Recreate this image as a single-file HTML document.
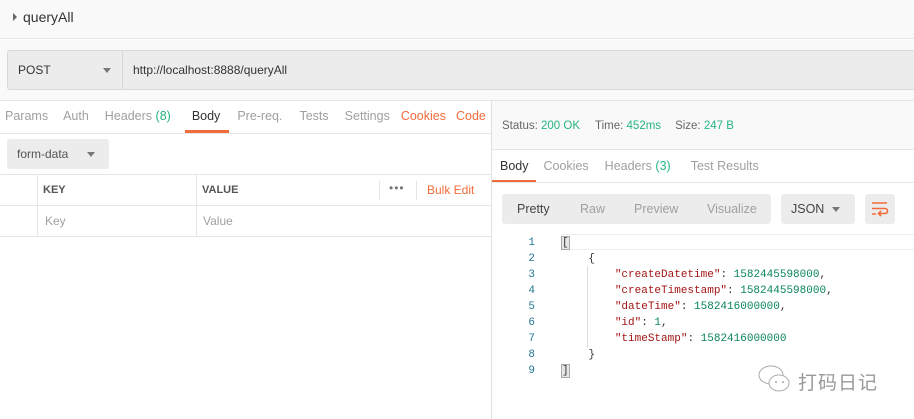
<!DOCTYPE html>
<html><head><meta charset="utf-8"><style>
*{box-sizing:border-box;margin:0;padding:0}
body{width:914px;height:419px;overflow:hidden;background:#fff;font-family:"Liberation Sans",sans-serif;font-size:12px;color:#505050;position:relative}
.a{position:absolute}
.g{color:#26b47f}
.o{color:#f26b3a}
.l{color:#a0a0a0}
.mono{font-family:"Liberation Mono",monospace;font-size:11px}
</style></head><body>
<div class="a" style="left:0;top:0;width:914px;height:39px;background:#f9f9f9;border-bottom:1px solid #e6e6e6"></div>
<div class="a" style="left:13px;top:13px;width:0;height:0;border-left:4px solid #666;border-top:4px solid transparent;border-bottom:4px solid transparent"></div>
<div class="a" style="left:23px;top:9px;font-size:14px;color:#333">queryAll</div>
<div class="a" style="left:0;top:40px;width:914px;height:60px;background:#f9f9f9"></div>
<div class="a" style="left:7px;top:50px;width:907px;height:40px;background:#ececec;border:1px solid #d8d8d8;border-right:none;border-radius:3px 0 0 3px"></div>
<div class="a" style="left:122px;top:51px;width:1px;height:38px;background:#d8d8d8"></div>
<div class="a" style="left:18px;top:63px;color:#333">POST</div>
<div class="a" style="left:103px;top:68px;border-top:5px solid #777;border-left:4px solid transparent;border-right:4px solid transparent"></div>
<div class="a" style="left:133px;top:63px;color:#333">http://localhost:8888/queryAll</div>
<div class="a" style="left:0;top:100px;width:914px;height:1px;background:#e6e6e6"></div>
<div class="a" style="left:0;top:133px;width:491px;height:1px;background:#e6e6e6"></div>
<div class="a" style="left:491px;top:100px;width:1px;height:319px;background:#e0e0e0"></div>
<div class="a l" style="left:5px;top:109px;font-size:12.5px;white-space:nowrap">Params<span style="margin-left:15px">Auth</span><span style="margin-left:16px">Headers <span class="g">(8)</span></span><span style="margin-left:21px;color:#333">Body</span><span style="margin-left:17px">Pre-req.</span><span style="margin-left:17px">Tests</span><span style="margin-left:16px">Settings</span><span class="o" style="margin-left:11px">Cookies</span><span class="o" style="margin-left:10px">Code</span></div>
<div class="a" style="left:185px;top:130px;width:44px;height:3px;background:#f26b3a"></div>
<div class="a" style="left:7px;top:139px;width:102px;height:30px;background:#ececec;border-radius:3px"></div>
<div class="a" style="left:17px;top:147px;color:#555">form-data</div>
<div class="a" style="left:87px;top:152px;border-top:5px solid #777;border-left:4px solid transparent;border-right:4px solid transparent"></div>
<div class="a" style="left:0;top:174px;width:491px;height:1px;background:#e6e6e6"></div>
<div class="a" style="left:0;top:205px;width:491px;height:1px;background:#e6e6e6"></div>
<div class="a" style="left:0;top:236px;width:491px;height:1px;background:#e6e6e6"></div>
<div class="a" style="left:37px;top:175px;width:1px;height:61px;background:#e6e6e6"></div>
<div class="a" style="left:196px;top:175px;width:1px;height:61px;background:#e6e6e6"></div>
<div class="a" style="left:379px;top:181px;width:1px;height:19px;background:#e6e6e6"></div>
<div class="a" style="left:416px;top:181px;width:1px;height:19px;background:#e6e6e6"></div>
<div class="a" style="left:43px;top:184px;font-size:11px;font-weight:bold;color:#555">KEY</div>
<div class="a" style="left:202px;top:184px;font-size:11px;font-weight:bold;color:#555">VALUE</div>
<div class="a" style="left:389px;top:181px;font-size:12px;color:#777;letter-spacing:1px">•••</div>
<div class="a o" style="left:427px;top:183px">Bulk Edit</div>
<div class="a l" style="left:45px;top:214px">Key</div>
<div class="a l" style="left:203px;top:214px">Value</div>
<div class="a" style="left:492px;top:101px;width:422px;height:49px;background:#f9f9f9;border-bottom:1px solid #e6e6e6"></div>
<div class="a" style="left:502px;top:120px;font-size:11.5px;color:#666;white-space:nowrap">Status:&nbsp;<span class="g">200 OK</span><span style="margin-left:15px">Time:&nbsp;</span><span class="g">452ms</span><span style="margin-left:14px">Size:&nbsp;</span><span class="g">247 B</span></div>
<div class="a l" style="left:500px;top:159px;font-size:12.5px;white-space:nowrap"><span style="color:#333">Body</span><span style="margin-left:15px">Cookies</span><span style="margin-left:16px">Headers <span class="g">(3)</span></span><span style="margin-left:20px">Test Results</span></div>
<div class="a" style="left:492px;top:180px;width:44px;height:3px;background:#f26b3a"></div>
<div class="a" style="left:492px;top:182px;width:422px;height:1px;background:#e6e6e6"></div>
<div class="a" style="left:502px;top:194px;width:269px;height:30px;background:#ececec;border-radius:3px"></div>
<div class="a" style="left:517px;top:202px;color:#444;font-size:12.5px">Pretty</div>
<div class="a l" style="left:580px;top:202px;font-size:12.5px">Raw</div>
<div class="a l" style="left:634px;top:202px;font-size:12.5px">Preview</div>
<div class="a l" style="left:707px;top:202px;font-size:12.5px">Visualize</div>
<div class="a" style="left:781px;top:194px;width:74px;height:30px;background:#ececec;border-radius:3px"></div>
<div class="a" style="left:791px;top:202px;color:#444;font-size:12.5px">JSON</div>
<div class="a" style="left:832px;top:207px;border-top:5px solid #777;border-left:4px solid transparent;border-right:4px solid transparent"></div>
<div class="a" style="left:865px;top:194px;width:30px;height:30px;background:#ececec;border-radius:3px"></div>
<svg class="a" style="left:870px;top:199px" width="20" height="20" viewBox="0 0 20 20"><path d="M2 4H17M2 9.5H15a2.5 2.5 0 0 1 0 5H9M11 12l-2.5 2.5L11 17M2 15H6" stroke="#f26b3a" stroke-width="1.6" fill="none"/></svg>
<div class="a" style="left:561px;top:234px;width:353px;height:16px;border-top:1px solid #eee;border-bottom:1px solid #eee"></div>
<div class="a" style="left:587px;top:266px;width:1px;height:82px;background:#ddd"></div>
<div class="a mono" style="left:521px;top:235px;line-height:16px;color:#237893;white-space:pre;text-align:right;width:14px">1
2
3
4
5
6
7
8
9</div>
<div class="a mono" style="left:562px;top:235px;line-height:16px;white-space:pre;color:#333"><span style="background:#e6e6e6;outline:1px solid #aaa">[</span>
    {
        <span style="color:#a31515">"createDatetime"</span>: <span style="color:#098658">1582445598000</span>,
        <span style="color:#a31515">"createTimestamp"</span>: <span style="color:#098658">1582445598000</span>,
        <span style="color:#a31515">"dateTime"</span>: <span style="color:#098658">1582416000000</span>,
        <span style="color:#a31515">"id"</span>: <span style="color:#098658">1</span>,
        <span style="color:#a31515">"timeStamp"</span>: <span style="color:#098658">1582416000000</span>
    }
<span style="background:#e6e6e6;outline:1px solid #aaa">]</span></div>
<svg class="a" style="left:755px;top:364px" width="40" height="30" viewBox="0 0 40 30"><ellipse cx="16" cy="11" rx="12" ry="9" fill="#fff" stroke="#aaa"/><ellipse cx="24" cy="19" rx="10" ry="8" fill="#fff" stroke="#aaa"/><circle cx="21" cy="18" r="1" fill="#aaa"/><circle cx="28" cy="18" r="1" fill="#aaa"/></svg>
<div class="a" style="left:798px;top:368px;font-size:19px;color:#999;font-family:'Liberation Sans','Noto Sans CJK SC',sans-serif;letter-spacing:1px">打码日记</div>
</body></html>
